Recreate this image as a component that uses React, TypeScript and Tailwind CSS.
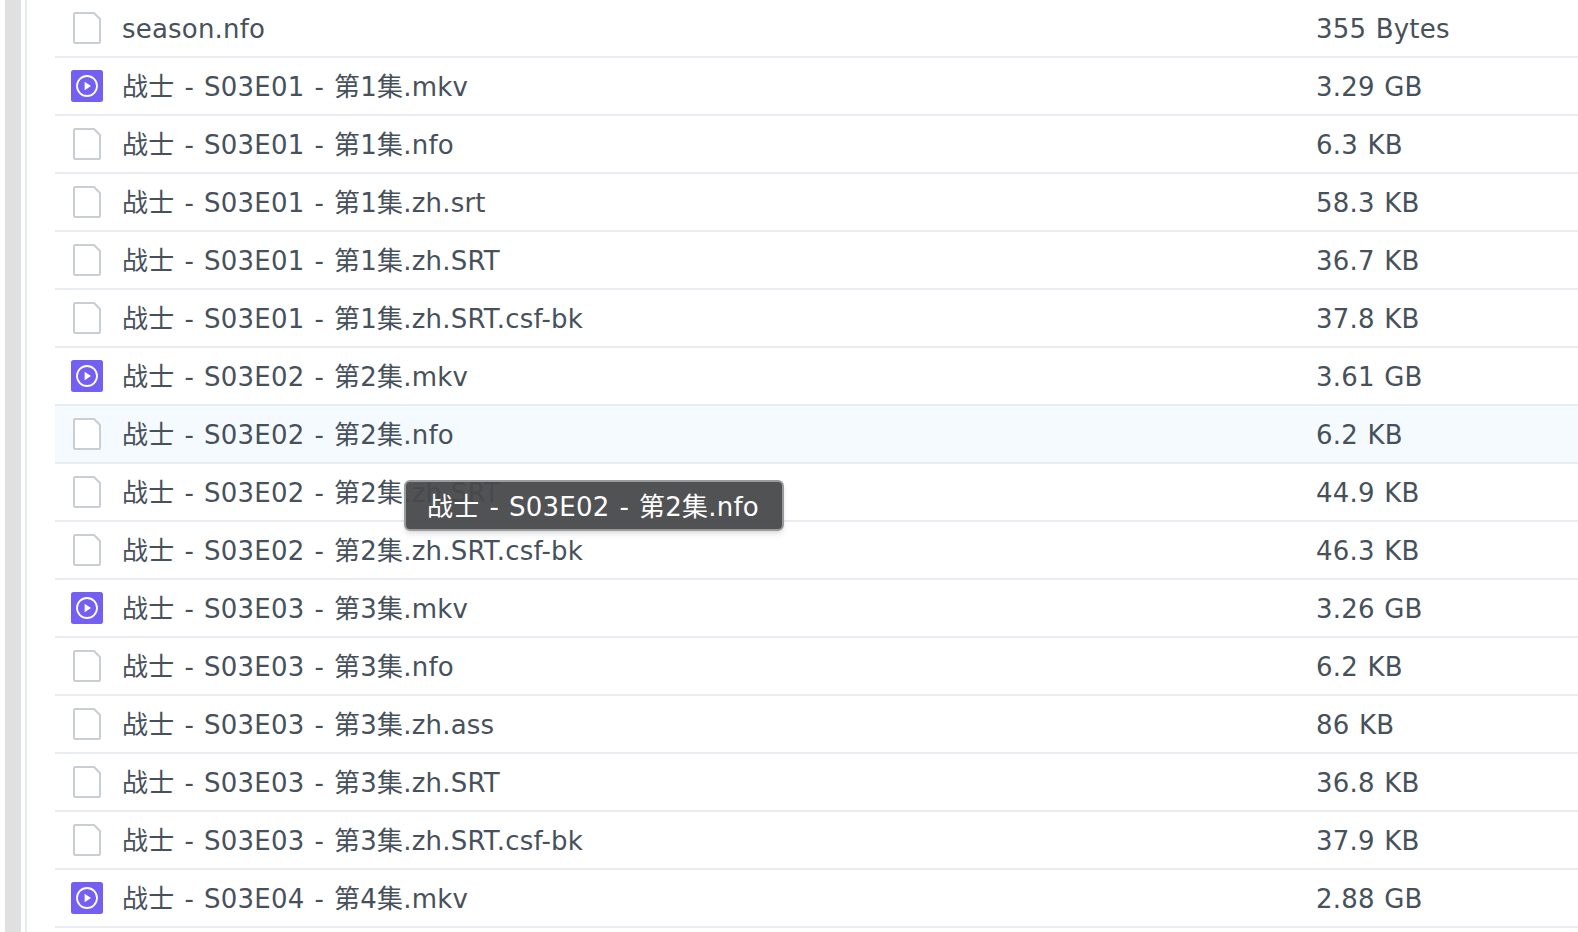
const files: { name: string; size: string; video?: boolean; hover?: boolean }[] = [
  { name: 'season.nfo', size: '355 Bytes' },
  { name: '战士 - S03E01 - 第1集.mkv', size: '3.29 GB', video: true },
  { name: '战士 - S03E01 - 第1集.nfo', size: '6.3 KB' },
  { name: '战士 - S03E01 - 第1集.zh.srt', size: '58.3 KB' },
  { name: '战士 - S03E01 - 第1集.zh.SRT', size: '36.7 KB' },
  { name: '战士 - S03E01 - 第1集.zh.SRT.csf-bk', size: '37.8 KB' },
  { name: '战士 - S03E02 - 第2集.mkv', size: '3.61 GB', video: true },
  { name: '战士 - S03E02 - 第2集.nfo', size: '6.2 KB', hover: true },
  { name: '战士 - S03E02 - 第2集.zh.SRT', size: '44.9 KB' },
  { name: '战士 - S03E02 - 第2集.zh.SRT.csf-bk', size: '46.3 KB' },
  { name: '战士 - S03E03 - 第3集.mkv', size: '3.26 GB', video: true },
  { name: '战士 - S03E03 - 第3集.nfo', size: '6.2 KB' },
  { name: '战士 - S03E03 - 第3集.zh.ass', size: '86 KB' },
  { name: '战士 - S03E03 - 第3集.zh.SRT', size: '36.8 KB' },
  { name: '战士 - S03E03 - 第3集.zh.SRT.csf-bk', size: '37.9 KB' },
  { name: '战士 - S03E04 - 第4集.mkv', size: '2.88 GB', video: true },
];

function VideoIcon() {
  return (
    <svg width="32" height="32" viewBox="0 0 32 32">
      <rect width="32" height="32" rx="2.5" fill="#7360f2" />
      <circle cx="16" cy="16" r="10" fill="none" stroke="#fff" strokeWidth="1.8" />
      <path d="M13.6 11.8 L20 16 L13.6 20.2 Z" fill="#fff" />
    </svg>
  );
}

function FileIcon() {
  return (
    <svg width="32" height="32" viewBox="0 0 32 32">
      <path
        d="M4 1 H23 L29 7 V30 A1 1 0 0 1 28 31 H4 A1 1 0 0 1 3 30 V2 A1 1 0 0 1 4 1 Z"
        fill="#fff"
        stroke="#c9ced3"
        strokeWidth="2"
      />
    </svg>
  );
}

export default function App() {
  return (
    <div
      className="relative h-[932px] overflow-hidden bg-white flex text-[#47515b] text-[26px] tracking-[0.2px]"
      style={{ fontFamily: '"DejaVu Sans", "Noto Sans CJK SC", sans-serif' }}
    >
      <div className="w-[5px] shrink-0" />
      <div className="w-4 shrink-0 bg-[#e0e0e0]" />
      <div className="w-1 shrink-0" />
      <div className="w-[2px] shrink-0 bg-[#e6ebf1]" />
      <div className="flex-1 min-w-0 pl-7">
        {files.map((file) => (
          <div
            key={file.name}
            className={`flex items-center h-[58px] border-b-2 border-[#e9edf1] pl-4 ${file.hover ? 'bg-[#f5faff]' : ''}`}
          >
            <div className="w-[32px] h-[32px] shrink-0">{file.video ? <VideoIcon /> : <FileIcon />}</div>
            <div className="flex-1 min-w-0 pl-[19px] pt-[2px] whitespace-nowrap [word-spacing:1.6px]">{file.name}</div>
            <div className="w-[262px] shrink-0 pt-[2px] whitespace-nowrap [word-spacing:1px]">{file.size}</div>
          </div>
        ))}
      </div>
      <div className="absolute left-[404px] top-[480px] w-[380px] h-[51px] rounded-[6px] border-2 border-[#9a9b9d] bg-[#48494b]/95 text-white flex items-center pt-1 pl-[21px] whitespace-nowrap shadow-md [word-spacing:1.6px]">
        战士 - S03E02 - 第2集.nfo
      </div>
    </div>
  );
}
